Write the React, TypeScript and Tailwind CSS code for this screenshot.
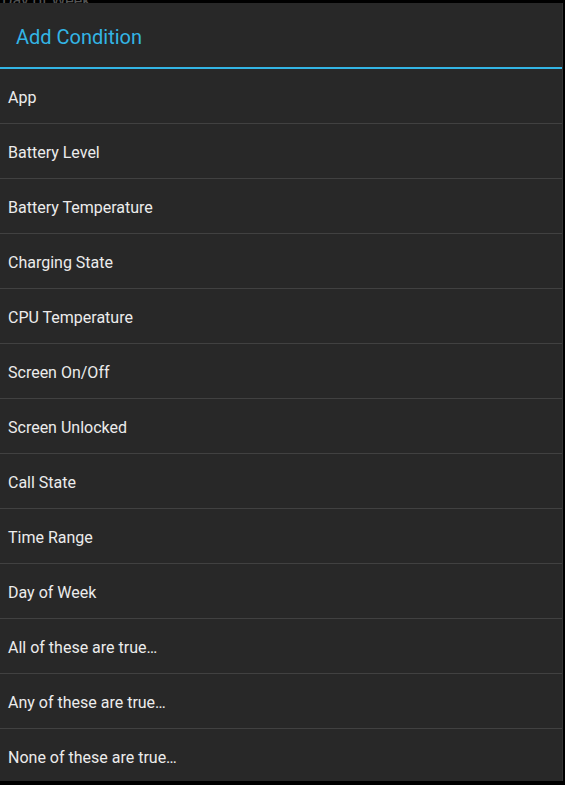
import React from 'react';

const conditions = [
  'App',
  'Battery Level',
  'Battery Temperature',
  'Charging State',
  'CPU Temperature',
  'Screen On/Off',
  'Screen Unlocked',
  'Call State',
  'Time Range',
  'Day of Week',
  'All of these are true…',
  'Any of these are true…',
  'None of these are true…',
];

const App: React.FC = () => {
  return (
    <div
      className="relative w-[565px] h-[785px] overflow-hidden bg-black"
      style={{ fontFamily: 'Roboto, "Liberation Sans", sans-serif' }}
    >
      {/* activity text peeking behind the dialog */}
      <div className="absolute left-[2px] top-[-11px] text-[16px] text-[#555]">Day of Week</div>

      <div className="relative mt-[3px] mr-[2px] h-[778px] bg-[#282828] border-r border-[#333] overflow-hidden">
        <div className="h-[64px] flex items-center pl-[16px] pt-[4px] text-[20px] text-[#33b5e5]">
          Add Condition
        </div>
        <div className="h-[2px] bg-[#33b5e5]" />
        <ul>
          {conditions.map((c, i) => (
            <li
              key={c}
              className={
                'h-[55px] flex items-center pl-[8px] pt-[3px] text-[16px] text-[#ececec] ' +
                (i < conditions.length - 1 ? 'border-b border-[#414141]' : '')
              }
            >
              {c}
            </li>
          ))}
        </ul>
      </div>
    </div>
  );
};

export default App;
